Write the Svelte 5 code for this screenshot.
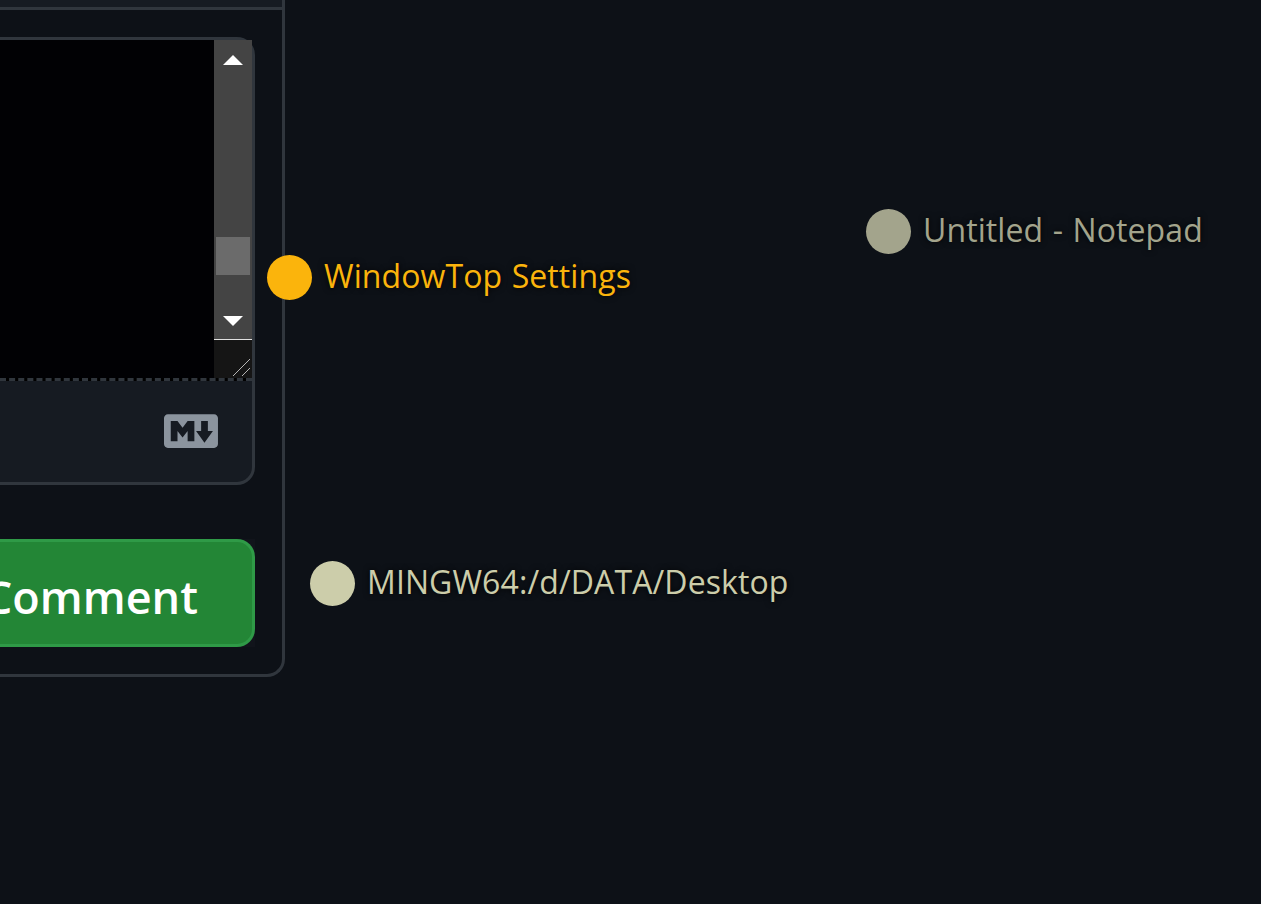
<script>
  const nodes = [
    { label: 'WindowTop Settings', x: 267, y: 255, color: '#fbb40c' },
    { label: 'Untitled - Notepad', x: 866, y: 209, color: '#a3a48c' },
    { label: 'MINGW64:/d/DATA/Desktop', x: 310, y: 561, color: '#cccdaa' }
  ]
</script>

<div class="page">
  <section class="panel">
    <div class="panel-head"></div>
    <div class="panel-body">
      <div class="editor">
        <div class="write">
          <div class="textarea"></div>
          <div class="scrollbar">
            <div class="track">
              <svg class="arrow" width="20" height="10" viewBox="0 0 20 10"><path d="M10 0 20 10H0Z" fill="#fff" /></svg>
              <div class="thumb"></div>
              <svg class="arrow" width="20" height="10" viewBox="0 0 20 10"><path d="M0 0H20L10 10Z" fill="#fff" /></svg>
            </div>
            <div class="corner">
              <svg width="20" height="20" viewBox="0 0 20 20">
                <path d="M1 18 18 1M10 18 18 10" stroke="#b5b5b5" stroke-width="1" fill="none" />
              </svg>
            </div>
          </div>
        </div>
        <div class="footer">
          <svg class="md" width="54" height="54" viewBox="0 0 16 16">
            <path
              fill="#8b949e"
              d="M14.85 3c.63 0 1.15.52 1.14 1.15v7.7c0 .63-.51 1.15-1.15 1.15H1.15C.52 13 0 12.48 0 11.84V4.15C0 3.52.52 3 1.15 3ZM9 11V5H7L5.5 7 4 5H2v6h2V8l1.5 1.92L7 8v3Zm2.99.5L14.5 8H13V5h-2v3H9.5Z"
            />
          </svg>
        </div>
      </div>
      <div class="actions">
        <button class="submit">Comment</button>
      </div>
    </div>
  </section>

  {#each nodes as node}
    <div class="node" style="left: {node.x}px; top: {node.y}px; color: {node.color}">
      <span class="dot" style="background: {node.color}"></span>
      <span class="label">{node.label}</span>
    </div>
  {/each}
</div>

<style>
  :global(body) {
    background: #0d1117;
    overflow: hidden;
  }

  .page {
    position: relative;
    width: 1261px;
    height: 904px;
    overflow: hidden;
    background: #0d1117;
    font-family: 'Open Sans', 'Noto Sans', sans-serif;
  }

  .panel {
    box-sizing: border-box;
    width: 285px;
    height: 677px;
    border-right: 3px solid #30363d;
    border-bottom: 3px solid #30363d;
    border-bottom-right-radius: 18px;
  }

  .panel-head {
    height: 7px;
    background: #161b22;
    border-bottom: 3px solid #30363d;
  }

  .panel-body {
    padding: 27px 27px 0 0;
  }

  .editor {
    box-sizing: border-box;
    height: 448px;
    border: 3px solid #30363d;
    border-left: 0;
    border-radius: 0 18px 18px 0;
    background: #161b22;
  }

  .write {
    display: flex;
    height: 338px;
    border-bottom: 3px dashed #30363d;
    background: #000;
  }

  .textarea {
    flex: 1;
    background: #010104;
  }

  .scrollbar {
    display: flex;
    flex-direction: column;
    width: 38px;
  }

  .track {
    position: relative;
    display: flex;
    flex-direction: column;
    align-items: center;
    height: 300px;
    padding: 15px 0 13px;
    box-sizing: border-box;
    justify-content: space-between;
    background: #444;
    border-bottom: 1px solid #e0e0e0;
  }

  .thumb {
    position: absolute;
    top: 197px;
    left: 2px;
    width: 34px;
    height: 38px;
    background: #6b6b6b;
  }

  .corner {
    flex: 1;
    display: flex;
    justify-content: flex-end;
    align-items: flex-end;
    background: #151515;
  }

  .corner svg {
    display: block;
  }

  .footer {
    display: flex;
    align-items: center;
    justify-content: flex-end;
    height: 101px;
    padding-right: 34px;
  }

  .md {
    margin-bottom: 2px;
  }

  .actions {
    margin-top: 54px;
    background: #11141b;
  }

  .submit {
    box-sizing: border-box;
    display: flex;
    align-items: center;
    justify-content: flex-end;
    width: 255px;
    height: 108px;
    padding: 6px 54px 0 0;
    border: 3px solid #2f9a47;
    border-left: 0;
    border-radius: 0 18px 18px 0;
    background: #238636;
    color: #fff;
    font-family: inherit;
    font-size: 45px;
    font-weight: 600;
    white-space: nowrap;
  }

  .node {
    position: absolute;
    display: flex;
    align-items: center;
    gap: 12px;
    height: 45px;
    white-space: nowrap;
  }

  .dot {
    width: 45px;
    height: 45px;
    border-radius: 50%;
    flex: none;
  }

  .label {
    margin-top: -4px;
    font-size: 32px;
    letter-spacing: 0.1px;
    word-spacing: 1px;
    text-shadow: 0 0 6px #000;
  }
</style>
